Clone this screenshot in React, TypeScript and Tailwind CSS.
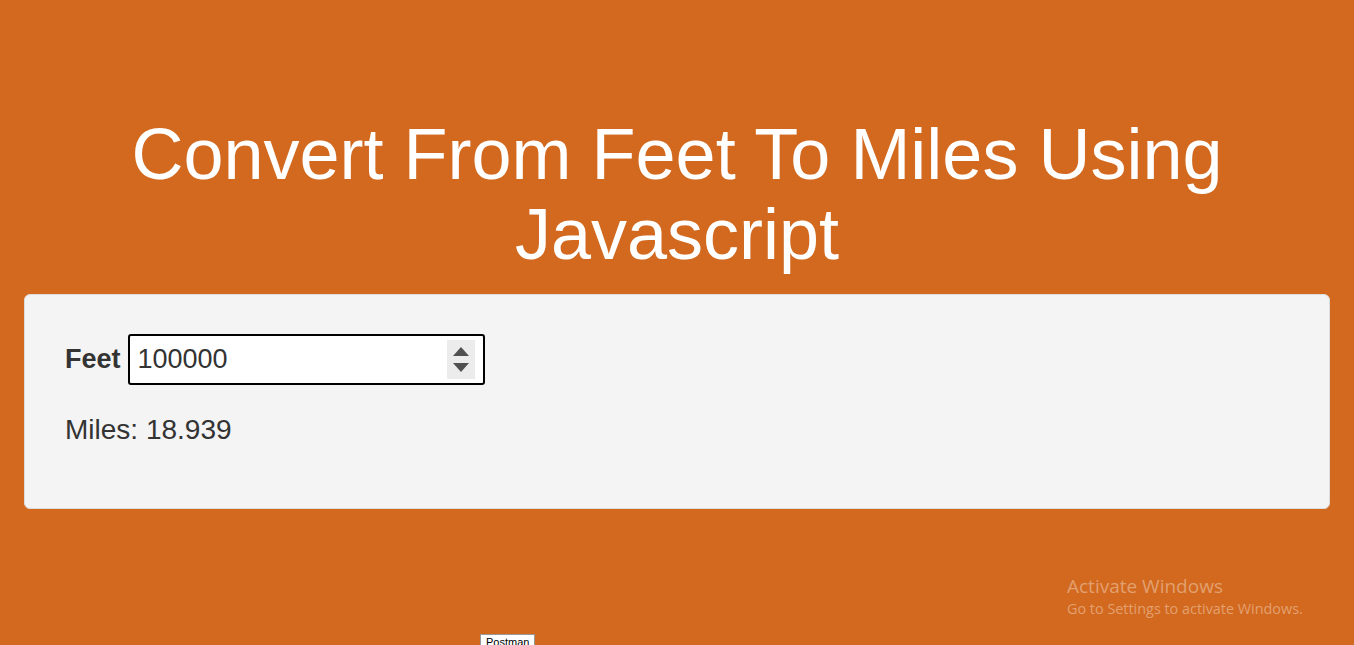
import { useState } from "react";

// Feet → miles converter: heading on an orange page, one card with the input and result
export default function App() {
  const [feet, setFeet] = useState("100000");
  const value = parseFloat(feet);
  const miles = isNaN(value) ? "" : (value / 5280).toFixed(3);

  return (
    <div
      className="relative min-h-[645px] bg-[#d2691e] px-6 pt-[114px] overflow-hidden"
      style={{ fontFamily: '"Liberation Sans", Arial, sans-serif' }}
    >
      <h1 className="text-center text-white text-[72px] leading-[80px] mx-auto max-w-[1120px] mb-[20px]">
        Convert From Feet To Miles Using Javascript
      </h1>

      <div className="bg-[#f4f4f4] border border-[#dddddd] rounded-[6px] h-[215px] px-10 pt-[39px] text-[#333333]">
        <div className="flex items-center gap-[7px]">
          <label htmlFor="feet" className="text-[27px] font-bold">
            Feet
          </label>
          <div className="relative">
            <input
              id="feet"
              type="number"
              value={feet}
              onChange={(e) => setFeet(e.target.value)}
              className="block w-[357px] h-[51px] border-2 border-black rounded-[3px] bg-white pl-2 pr-10 text-[27px] text-[#333333] outline-none [appearance:textfield] [&::-webkit-inner-spin-button]:appearance-none"
            />
            {/* stepper arrows */}
            <div className="absolute right-[10px] top-[6px] w-[28px] h-[39px] bg-[#ececec] flex flex-col items-center justify-center gap-[7px] pointer-events-none">
              <svg width="16" height="9" viewBox="0 0 16 9">
                <path d="M8 0 L16 9 L0 9 Z" fill="#505050" />
              </svg>
              <svg width="16" height="9" viewBox="0 0 16 9">
                <path d="M0 0 L16 0 L8 9 Z" fill="#505050" />
              </svg>
            </div>
          </div>
        </div>
        <p className="text-[28px] mt-[24px]">Miles: {miles}</p>
      </div>

      {/* desktop watermark */}
      <div
        className="absolute left-[1067px] top-[575px] text-[#e3a070] leading-tight"
        style={{ fontFamily: '"Open Sans", sans-serif' }}
      >
        <div className="text-[19px]">Activate Windows</div>
        <div className="text-[14.4px] mt-[1px]">Go to Settings to activate Windows.</div>
      </div>

      {/* taskbar tooltip */}
      <div className="absolute left-[480px] top-[634px] bg-white border border-[#999] px-[5px] text-[11px] leading-[14px] text-black">
        Postman
      </div>
    </div>
  );
}
